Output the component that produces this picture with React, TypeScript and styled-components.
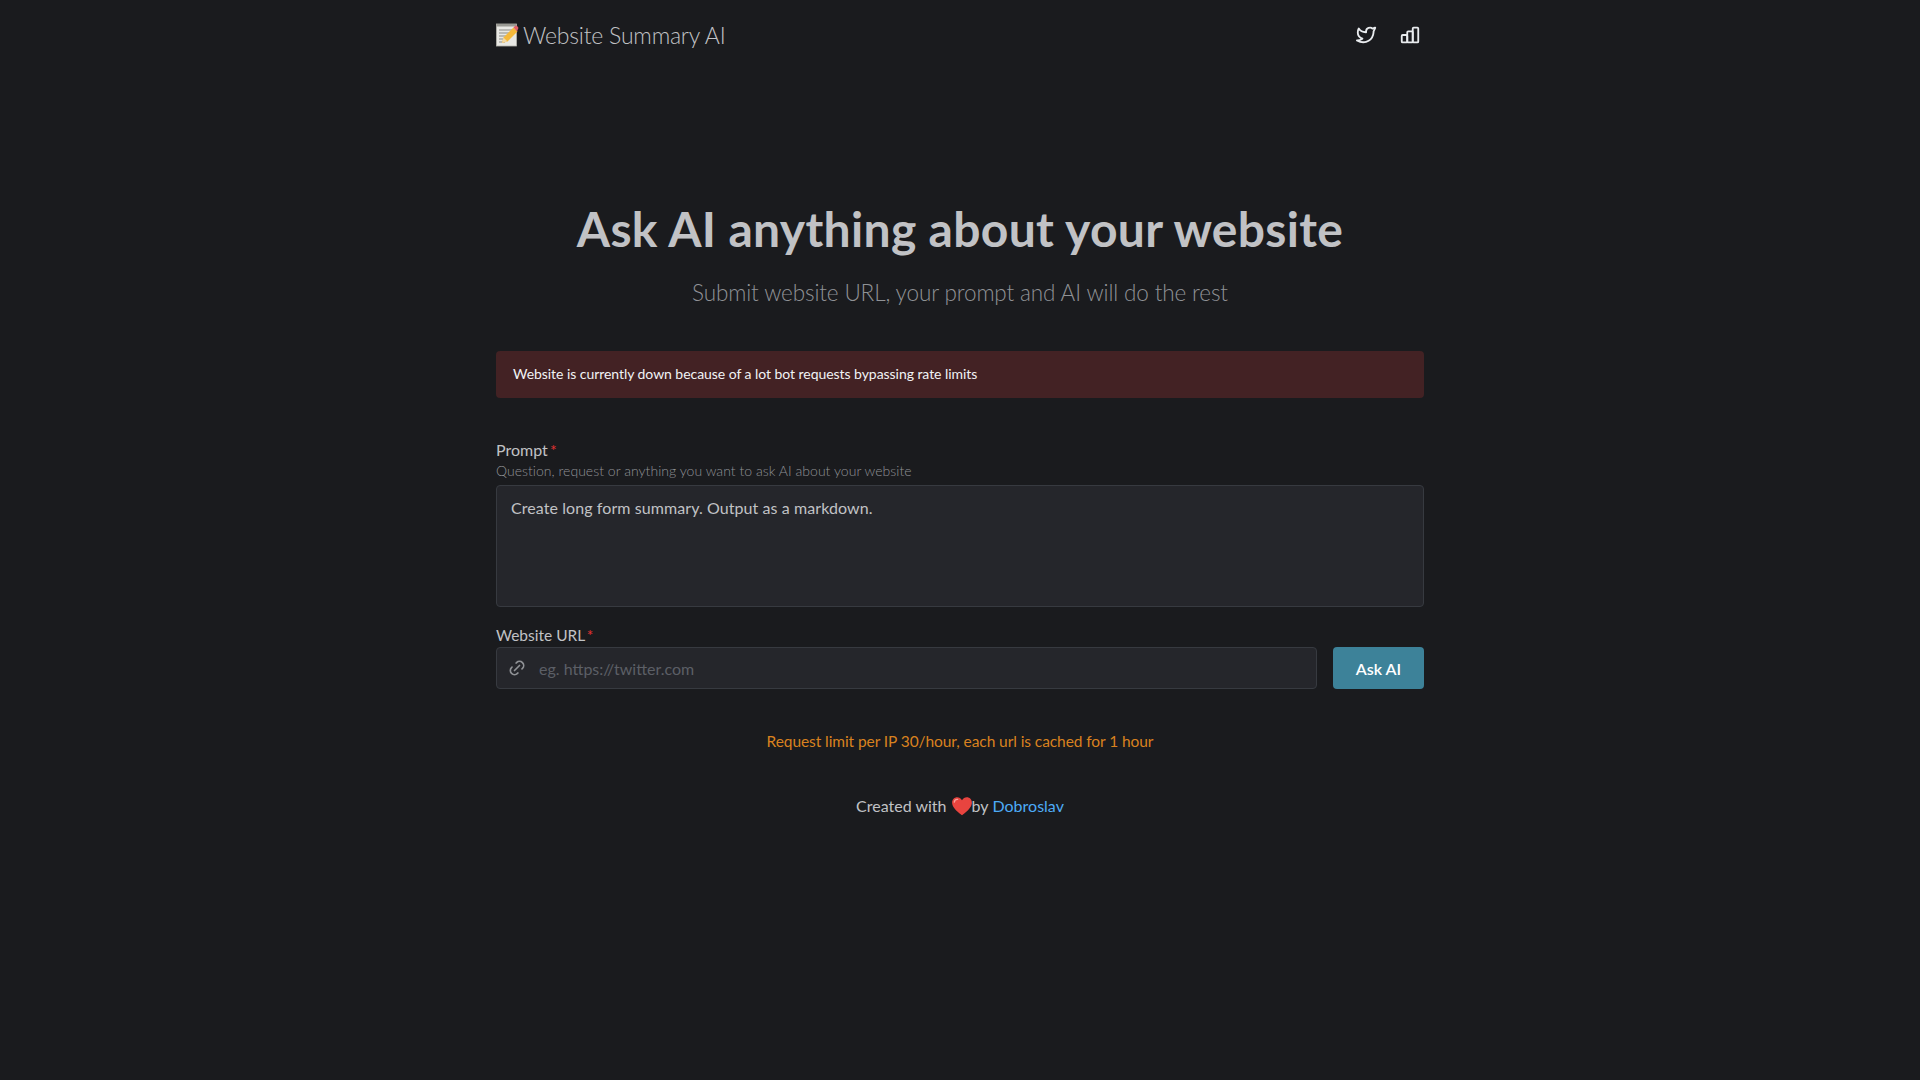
import React from "react";
import styled, { createGlobalStyle } from "styled-components";

const Global = createGlobalStyle`
  html, body { margin: 0; padding: 0; background: #1a1b1e; }
  body { font-family: "Lato", "Liberation Sans", sans-serif; color: #c1c2c5; }
  * { box-sizing: border-box; }
`;

const Page = styled.div`
  width: 928px;
  margin: 0 auto;
  min-height: 1080px;
`;
const Header = styled.header`
  height: 70px;
  display: flex;
  align-items: center;
  justify-content: space-between;
`;
const Brand = styled.div`
  display: flex;
  align-items: center;
  gap: 4px;
  font-size: 23px;
  letter-spacing: -0.22px;
  line-height: 30px;
  color: #c1c2c5;
  font-weight: 300;
`;
const HeaderIcons = styled.div`
  display: flex;
  gap: 22px;
  margin-right: 3px;
  color: #e9ecef;
`;
const IconLink = styled.a`
  width: 22px;
  height: 22px;
  display: flex;
  color: inherit;
`;
const Hero = styled.section`
  padding-top: 128px;
  text-align: center;
`;
const Title = styled.h1`
  margin: 0;
  font-size: 48px;
  letter-spacing: 0.32px;
  line-height: 62px;
  font-weight: 700;
  color: #c1c2c5;
`;
const Subtitle = styled.p`
  margin: 18px 0 0;
  font-size: 22.5px;
  letter-spacing: -0.13px;
  line-height: 30px;
  font-weight: 300;
  color: #909296;
`;
const Alert = styled.div`
  margin-top: 43px;
  height: 47px;
  padding: 0 17px 2px;
  display: flex;
  align-items: center;
  border-radius: 4px;
  background: #432224;
  color: #f1f3f5;
  font-size: 14px;
  letter-spacing: -0.05px;
`;
const Field = styled.div`
  margin-top: ${(p: { $top: number }) => p.$top}px;
`;
const Label = styled.label<{ $tight?: boolean }>`
  display: block;
  font-size: ${(p) => (p.$tight ? 15.5 : 16)}px;
  line-height: 20px;
  font-weight: 400;
  color: #c1c2c5;
  margin-bottom: ${(p) => (p.$tight ? 2 : 0)}px;
`;
const Required = styled.span`
  color: #e03131;
  margin-left: -2px;
`;
const Description = styled.div`
  font-size: 14px;
  letter-spacing: 0.03px;
  line-height: 20px;
  font-weight: 300;
  color: #909296;
  margin-top: 1px;
`;
const TextArea = styled.textarea`
  display: block;
  width: 100%;
  height: 122px;
  margin-top: 4px;
  padding: 10px 14px;
  resize: none;
  outline: none;
  background: #25262b;
  border: 1px solid #373a40;
  border-radius: 4px;
  color: #c1c2c5;
  font: 400 16px/24px "Lato", "Liberation Sans", sans-serif;
  letter-spacing: 0.08px;
`;
const UrlRow = styled.div`
  display: flex;
  gap: 16px;
`;
const InputWrap = styled.div`
  position: relative;
  flex: 1;
  height: 42px;
`;
const InputIcon = styled.span`
  position: absolute;
  left: 11px;
  top: 11px;
  width: 20px;
  height: 20px;
  display: flex;
  color: #909296;
`;
const UrlInput = styled.input`
  width: 100%;
  height: 100%;
  padding: 0 14px 0 42px;
  outline: none;
  background: #25262b;
  border: 1px solid #373a40;
  border-radius: 4px;
  color: #c1c2c5;
  font: 400 16px "Lato", "Liberation Sans", sans-serif;
  &::placeholder { color: #5c5f66; opacity: 1; }
`;
const AskButton = styled.button`
  width: 91px;
  height: 42px;
  border: 0;
  border-radius: 4px;
  background: #3d8299;
  color: #fff;
  font: 600 16px "Lato", "Liberation Sans", sans-serif;
`;
const Notice = styled.p`
  margin: 42px 0 0;
  text-align: center;
  font-size: 15.5px;
  letter-spacing: -0.08px;
  line-height: 20px;
  color: #d9821f;
`;
const Footer = styled.p`
  margin: 44px 0 0;
  display: flex;
  justify-content: center;
  align-items: center;
  font-size: 16px;
  line-height: 20px;
  color: #c1c2c5;
`;
const Heart = styled.svg`
  width: 22px;
  height: 22px;
  margin: 0 -2px 0 5px;
`;
const Author = styled.a`
  color: #4dabf7;
  margin-left: 4px;
  text-decoration: none;
`;

const Tabler = ({ children, size = 24 }: { children: React.ReactNode; size?: number }) => (
  <svg width={size} height={size} viewBox="0 0 24 24" fill="none" stroke="currentColor" strokeWidth="2" strokeLinecap="round" strokeLinejoin="round">
    {children}
  </svg>
);

const Memo = () => (
  <svg width="23" height="24" viewBox="0 0 23 24">
    <rect x="0.5" y="1" width="20" height="22" fill="#e8e8e4" stroke="#b5b5ad" strokeWidth="0.8" />
    <rect x="0.5" y="1" width="20" height="2.5" fill="#9a9a94" />
    <path d="M3 7h14M3 10h10M3 13h7M3 16h5M3 19h6" stroke="#8b8b86" strokeWidth="1" />
    <path d="M6 20l1.5-5.5L17.5 4.5l4 4L11.5 18.5z" fill="#f5b93a" />
    <path d="M6 20l1.5-5.5 4 4z" fill="#f3d9a4" />
    <path d="M17.5 4.5l1.5-1.5a1.5 1.5 0 0 1 2 0l1 1a1.5 1.5 0 0 1 0 2l-1 2.5z" fill="#e0606a" />
  </svg>
);

export default function App() {
  return (
    <>
      <Global />
      <Page>
        <Header>
          <Brand>
            <Memo />
            <span>Website Summary AI</span>
          </Brand>
          <HeaderIcons>
            <IconLink>
              <Tabler size={22}>
                <path d="M22 4.01c-1 .49 -1.99 .689 -3 .99c-1.11 -1.253 -2.755 -1.31 -4.3 -.73s-2.573 2.02 -2.6 3.72v1c-3.422 .08 -6.46 -1.48 -8 -4c0 0 -4.182 7.433 4 11c-1.872 1.247 -3.739 2.088 -6 2c3.308 1.803 6.913 2.423 10.034 1.517c3.58 -1.04 6.522 -3.723 7.651 -7.742a13.84 13.84 0 0 0 .497 -3.753c-.002 -.249 1.51 -2.772 1.818 -4.013z" />
              </Tabler>
            </IconLink>
            <IconLink>
              <Tabler size={22}>
                <path d="M3 13a1 1 0 0 1 1 -1h4a1 1 0 0 1 1 1v6a1 1 0 0 1 -1 1h-4a1 1 0 0 1 -1 -1z" />
                <path d="M9 9a1 1 0 0 1 1 -1h4a1 1 0 0 1 1 1v10a1 1 0 0 1 -1 1h-4a1 1 0 0 1 -1 -1z" />
                <path d="M15 5a1 1 0 0 1 1 -1h4a1 1 0 0 1 1 1v14a1 1 0 0 1 -1 1h-4a1 1 0 0 1 -1 -1z" />
              </Tabler>
            </IconLink>
          </HeaderIcons>
        </Header>
        <Hero>
          <Title>Ask AI anything about your website</Title>
          <Subtitle>Submit website URL, your prompt and AI will do the rest</Subtitle>
        </Hero>
        <Alert>Website is currently down because of a lot bot requests bypassing rate limits</Alert>
        <Field $top={42}>
          <Label>Prompt <Required>*</Required></Label>
          <Description>Question, request or anything you want to ask AI about your website</Description>
          <TextArea defaultValue="Create long form summary. Output as a markdown." />
        </Field>
        <Field $top={18}>
          <Label $tight>Website URL <Required>*</Required></Label>
          <UrlRow>
            <InputWrap>
              <InputIcon>
                <Tabler size={20}>
                  <path d="M9 15l6 -6" />
                  <path d="M11 6l.463 -.536a5 5 0 0 1 7.071 7.072l-.534 .464" />
                  <path d="M13 18l-.397 .534a5.068 5.068 0 0 1 -7.127 0a4.972 4.972 0 0 1 0 -7.071l.524 -.463" />
                </Tabler>
              </InputIcon>
              <UrlInput placeholder="eg. https://twitter.com" />
            </InputWrap>
            <AskButton>Ask AI</AskButton>
          </UrlRow>
        </Field>
        <Notice>Request limit per IP 30/hour, each url is cached for 1 hour</Notice>
        <Footer>
          Created with
          <Heart viewBox="0 0 20 20">
            <path d="M10 18.5C4 14 1 10.5 1 6.8 1 4 3.1 2 5.6 2 7.4 2 9 3 10 4.8 11 3 12.6 2 14.4 2 16.9 2 19 4 19 6.8c0 3.7-3 7.2-9 11.7z" fill="#e8443f" />
            <path d="M3 6.5C3.3 4.9 4.5 3.9 6 4" fill="none" stroke="#f7a09a" strokeWidth="1.2" strokeLinecap="round" />
          </Heart>
          by<Author>Dobroslav</Author>
        </Footer>
      </Page>
    </>
  );
}
